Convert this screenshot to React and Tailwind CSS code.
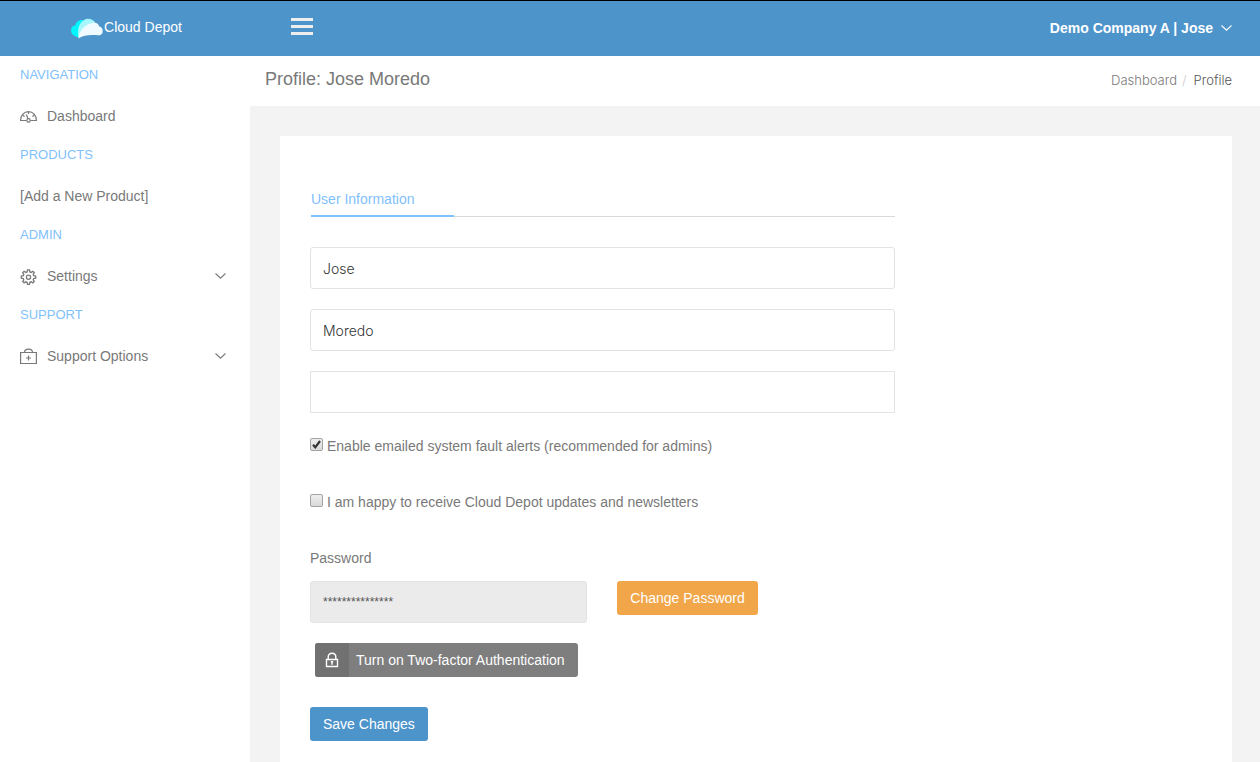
import { useState } from 'react'

const MENU = [
  { title: 'NAVIGATION', items: [{ label: 'Dashboard', icon: GaugeIcon }] },
  { title: 'PRODUCTS', items: [{ label: '[Add a New Product]' }] },
  { title: 'ADMIN', items: [{ label: 'Settings', icon: GearIcon, expandable: true }] },
  { title: 'SUPPORT', items: [{ label: 'Support Options', icon: KitIcon, expandable: true }] },
]

function GaugeIcon() {
  return (
    <svg viewBox="0 0 17 17" className="size-[17px]" fill="none" stroke="currentColor" strokeWidth="1.2" aria-hidden="true">
      <path d="M6.500 12.500H.6C.6 7.500 4 3.600 8.500 3.600s7.900 3.900 7.900 8.900h-5.900" />
      <circle cx="8.500" cy="12.400" r="1.700" />
      <path d="M8 10.700 6.300 6.500M8.500 3.600v2.400M2.700 7l1.800 1.500M14.300 7l-1.800 1.500" />
    </svg>
  )
}

function GearIcon() {
  return (
    <svg viewBox="0 0 17 17" className="size-[17px] mt-0.5" fill="none" stroke="currentColor" strokeWidth="1.3" aria-hidden="true">
      <path d="M7.500.9h2l.4 2 1.300.5 1.700-1.100 1.400 1.400-1.100 1.700.5 1.300 2 .4v2l-2 .4-.5 1.300 1.100 1.700-1.400 1.400-1.700-1.100-1.300.5-.4 2h-2l-.4-2-1.300-.5-1.700 1.100-1.400-1.400 1.100-1.700-.5-1.300-2-.4v-2l2-.4.5-1.300-1.100-1.700 1.400-1.400 1.700 1.100 1.300-.5z" />
      <circle cx="8.500" cy="8.200" r="2.100" />
    </svg>
  )
}

function KitIcon() {
  return (
    <svg viewBox="0 0 17 17" className="size-[17px]" fill="none" stroke="currentColor" strokeWidth="1.2" aria-hidden="true">
      <path d="M.6 4.500h15.800v11H.6zM4.500 4.500C4.500 2.200 6 1.200 8.500 1.200s4 1 4 3.300M8.500 7.500v5M6 10h5" />
    </svg>
  )
}

function ChevronIcon({ className }) {
  return (
    <svg viewBox="0 0 11 6" className={className} fill="none" stroke="currentColor" strokeWidth="1.1" aria-hidden="true">
      <path d="m.5.5 5 4.700 5-4.700" />
    </svg>
  )
}

function LockIcon() {
  return (
    <svg viewBox="0 0 14 16" className="h-4 w-3.5" fill="none" stroke="currentColor" strokeWidth="1.4" aria-hidden="true">
      <path d="M1.500 7.500h11v7h-11zM3.200 7.500V5C3.200 2.800 4.700 1.200 7 1.200S10.800 2.800 10.800 5v2.500M5.800 9.700h2.400M7 9.700v3" />
    </svg>
  )
}

function CloudLogo() {
  return (
    <svg viewBox="0 0 34 22" className="h-[22px] w-[34px]" aria-hidden="true">
      <path d="M8.500 20.500C4.500 19 1 17.500 1 13.500 1 10.500 3 8.600 5.500 8.300 5.800 5 9 2.300 13 3l4 3-6 12z" fill="#00f6fb" />
      <path d="M8.500 20.500C7 13 9 6 13.500 3.500 16 .8 22.500.8 25.500 6l-4 5z" fill="#a5f7fc" />
      <path d="M8.500 21.500C9 14 14.500 7.500 22.500 6c4-.7 6 .6 6.500 3.200 2.800.8 4 2.800 3.700 5.500-.4 2.600-2 3.600-4.500 3.600-7-.5-14.200-.7-19.700 3.200z" fill="#effbff" />
    </svg>
  )
}

function Header() {
  return (
    <header className="h-14 bg-[#4d94cb] border-t border-black flex items-center text-white shrink-0">
      <a href="#" className="w-[250px] flex items-center justify-center pl-0.5 pb-0.5">
        <CloudLogo />
        <span className="pb-0.5">Cloud Depot</span>
      </a>
      <button type="button" aria-label="Toggle menu" className="ml-[41px] mb-1 flex flex-col gap-1">
        <span className="block w-[22px] h-[3px] bg-[#eee]" />
        <span className="block w-[22px] h-[3px] bg-[#eee]" />
        <span className="block w-[22px] h-[3px] bg-[#eee]" />
      </button>
      <button type="button" className="ml-auto mr-7 pb-0.5 flex items-center gap-2 font-bold">
        Demo Company A | Jose
        <ChevronIcon className="w-[11px] h-1.5" />
      </button>
    </header>
  )
}

function Sidebar() {
  return (
    <nav className="w-[250px] shrink-0 bg-white">
      {MENU.map((section) => (
        <section key={section.title}>
          <h2 className="h-10 px-5 leading-[38px] text-[13px] text-[#7fc1fc]">{section.title}</h2>
          {section.items.map(({ label, icon: Icon, expandable }) => (
            <a key={label} href="#" className="h-10 pl-5 pr-6 flex items-center gap-2.5">
              {Icon && <Icon />}
              {label}
              {expandable && <ChevronIcon className="ml-auto w-[11px] h-1.5" />}
            </a>
          ))}
        </section>
      ))}
    </nav>
  )
}

function TextField({ label, value, onChange, className = 'rounded-[3px]' }) {
  return (
    <input
      type="text"
      aria-label={label}
      value={value}
      onChange={(e) => onChange(e.target.value)}
      className={`block w-full h-[42px] mb-5 px-3 border border-[#e3e3e3] bg-white font-['Inter'] font-light text-sm text-[#333] outline-none ${className}`}
    />
  )
}

function CheckField({ label, checked, onChange }) {
  return (
    <label className="flex items-center gap-1 h-5 mb-9">
      <span className="relative block size-[13px] mb-1">
        <input
          type="checkbox"
          checked={checked}
          onChange={(e) => onChange(e.target.checked)}
          className="block appearance-none size-[13px] rounded-xs border border-[#a3a3a3] bg-linear-to-b from-[#eee] to-[#d9d9d9]"
        />
        {checked && (
          <svg viewBox="0 0 13 13" className="absolute inset-0 pointer-events-none" fill="none" stroke="#333" strokeWidth="2.2" aria-hidden="true">
            <path d="m3 6.800 2.300 2.500L10 3" />
          </svg>
        )}
      </span>
      {label}
    </label>
  )
}

function ProfileForm() {
  const [form, setForm] = useState({ first: 'Jose', last: 'Moredo', phone: '', alerts: true, news: false })
  const set = (key) => (value) => setForm((prev) => ({ ...prev, [key]: value }))

  return (
    <form onSubmit={(e) => e.preventDefault()} className="w-2/3 px-[15px]">
      <div className="flex items-end ml-px mb-[30px]">
        <button type="button" className="w-[143px] h-7 pb-1.5 border-b-2 border-[#7fc1fc] text-left text-[#7fc1fc] leading-5">
          User Information
        </button>
        <span className="flex-1 border-b border-[#d9d9d9]" />
      </div>

      <TextField label="First name" value={form.first} onChange={set('first')} />
      <TextField label="Last name" value={form.last} onChange={set('last')} />
      <TextField label="Phone" value={form.phone} onChange={set('phone')} className="rounded-none" />

      <div className="pt-[3px]">
        <CheckField
          label="Enable emailed system fault alerts (recommended for admins)"
          checked={form.alerts}
          onChange={set('alerts')}
        />
        <CheckField
          label="I am happy to receive Cloud Depot updates and newsletters"
          checked={form.news}
          onChange={set('news')}
        />
      </div>

      <label htmlFor="password" className="block leading-5 mb-[13px]">Password</label>
      <div className="flex gap-[30px] mb-5">
        <div className="flex-1">
          <input
            id="password"
            type="text"
            readOnly
            value="***************"
            className="block w-full h-[42px] px-3 rounded-[3px] border border-[#e3e3e3] bg-[#ebebeb] text-xs text-[#555] outline-none"
          />
        </div>
        <div className="flex-1">
          <button type="button" className="h-[34px] px-[13px] rounded-[3px] bg-[#f0a649] text-white">Change Password</button>
        </div>
      </div>

      <button type="button" className="ml-[5px] mb-[30px] h-[34px] flex items-center rounded-[3px] overflow-hidden bg-[#7e7e7e] text-white">
        <span className="w-[34px] h-full flex items-center justify-center bg-[#717171]">
          <LockIcon />
        </span>
        <span className="pl-[7px] pr-[13px]">Turn on Two-factor Authentication</span>
      </button>

      <button type="submit" className="block h-[34px] px-[13px] rounded-[3px] bg-[#4d94cb] text-white">Save Changes</button>
    </form>
  )
}

export default function App() {
  return (
    <div className="min-h-screen flex flex-col bg-white font-['Liberation_Sans',Arial,sans-serif] text-sm text-[#797979]">
      <Header />
      <div className="flex-1 flex">
        <Sidebar />
        <div className="flex-1 flex flex-col">
          <div className="h-[50px] pl-[15px] pr-7 flex items-center justify-between">
            <h1 className="text-lg pb-1">Profile: Jose Moredo</h1>
            <nav aria-label="Breadcrumb" className="pb-px font-['Inter'] font-light text-[13px]">
              <a href="#">Dashboard</a>
              <span className="px-[5px] text-[#ccc]">/</span>
              <span className="pl-0.5 text-[#555]">Profile</span>
            </nav>
          </div>
          <main className="flex-1 flex flex-col bg-[#f3f3f3] pt-[30px] pl-[30px] pr-7">
            <div className="flex-1 bg-white px-[15px] pt-[53px] pb-5">
              <ProfileForm />
            </div>
          </main>
        </div>
      </div>
    </div>
  )
}
